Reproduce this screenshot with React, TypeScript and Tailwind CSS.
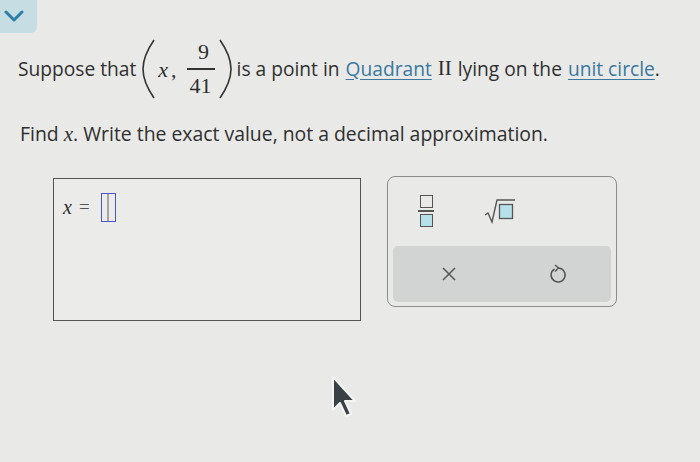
import React from "react";

const sans = { fontFamily: '"Open Sans", "DejaVu Sans", sans-serif' };
const serif = { fontFamily: '"Liberation Serif", "DejaVu Serif", serif' };

function Paren({ flip }: { flip?: boolean }) {
  return (
    <svg width="14" height="62" viewBox="0 0 14 62" className="shrink-0">
      <path
        d={flip ? "M2 2 Q13 18 13 31 Q13 44 2 60" : "M12 2 Q1 18 1 31 Q1 44 12 60"}
        fill="none"
        stroke="#333"
        strokeWidth="1.6"
      />
    </svg>
  );
}

export default function App() {
  return (
    <div className="w-[700px] h-[462px] bg-[#e9e9e7] overflow-hidden relative text-[#2f2f2f]" style={sans}>
      <div className="w-[37px] h-[33px] bg-[#c6dee3] rounded-br-[6px] flex items-center justify-center">
        <svg width="20" height="12" viewBox="0 0 20 12" className="-ml-[10px] -mt-[2px]">
          <path d="M2 2 L10 10 L18 2" fill="none" stroke="#2b7ea6" strokeWidth="3" strokeLinecap="round" strokeLinejoin="round" />
        </svg>
      </div>

      <div className="pl-[18px] mt-[5px] flex items-center h-[62px] text-[19.2px]">
        <span>Suppose that</span>
        <span className="ml-[6px]"><Paren /></span>
        <span className="italic text-[22px] ml-[2px]" style={serif}>x</span>
        <span className="text-[22px] ml-[3px]" style={serif}>,</span>
        <span className="flex flex-col items-center ml-[10px] text-[22px] leading-none" style={serif}>
          <span className="pb-[5px] pl-[6px]">9</span>
          <span className="w-[28px] h-[1.5px] bg-[#333]"></span>
          <span className="pt-[5px]">41</span>
        </span>
        <span className="ml-[3px]"><Paren flip /></span>
        <span className="ml-[5px]">is a point in</span>
        <span className="ml-[6px] underline underline-offset-[3px] text-[#3a78a0] decoration-[#3a78a0]">Quadrant</span>
        <span className="ml-[6px] text-[21px]" style={serif}>II</span>
        <span className="ml-[6px]">lying on the</span>
        <span className="ml-[6px] underline underline-offset-[3px] text-[#3a78a0] decoration-[#3a78a0]">unit circle</span>
        <span>.</span>
      </div>

      <div className="pl-[20px] mt-[23px] text-[19.4px] leading-[22px]">
        Find <span className="italic text-[21px]" style={serif}>x</span>. Write the exact value, not a decimal approximation.
      </div>

      <div className="flex mt-[31px] pl-[53px] items-start">
        <div className="w-[308px] h-[143px] border border-[#555] bg-[#ebebea] mt-[2px] pt-[13px] pl-[9px] flex items-start">
          <div className="flex items-center h-[30px]">
            <span className="italic text-[20px]" style={serif}>x</span>
            <span className="ml-[7px] text-[19px] text-[#555]" style={serif}>=</span>
            <div className="ml-[11px] w-[15px] h-[29px] border-[1.5px] border-[#4a55c9] relative flex justify-center">
              <div className="w-[2px] h-full bg-[#777] opacity-60"></div>
            </div>
          </div>
        </div>

        <div className="ml-[26px] w-[230px] h-[131px] border border-[#8d8d8d] rounded-[8px] flex flex-col px-[5px] pt-[18px] pb-[4px]">
          <div className="flex items-center h-[32px] pl-[25px]">
            <div className="flex flex-col items-center">
              <div className="w-[13px] h-[13px] border border-[#555]"></div>
              <div className="w-[16px] h-[1.5px] bg-[#555] my-[2px]"></div>
              <div className="w-[13px] h-[13px] border border-[#555] bg-[#b6e1ea]"></div>
            </div>
            <svg width="32" height="26" viewBox="0 0 32 26" className="ml-[50px]">
              <path d="M1 17 L4 15 L8 24 L13 2 L31 2" fill="none" stroke="#555" strokeWidth="1.4" />
              <rect x="15.5" y="6.5" width="13" height="14" fill="#b6e1ea" stroke="#555" strokeWidth="1.3" />
            </svg>
          </div>
          <div className="mt-auto h-[56px] bg-[#d2d3d3] rounded-[5px] flex items-center">
            <svg width="16" height="16" viewBox="0 0 16 16" className="ml-[48px]">
              <path d="M2 2 L14 14 M14 2 L2 14" stroke="#555" strokeWidth="1.5" />
            </svg>
            <svg width="18" height="20" viewBox="0 0 18 20" className="ml-[92px]">
              <path d="M5.5 5 A7 7 0 1 0 9 4" fill="none" stroke="#555" strokeWidth="1.5" />
              <path d="M6 1 L9.5 4 L6 7.5" fill="none" stroke="#555" strokeWidth="1.5" strokeLinejoin="round" />
            </svg>
          </div>
        </div>
      </div>

      <svg width="30" height="46" viewBox="0 0 30 46" className="absolute left-[329px] top-[374px]">
        <path d="M4 3 L4 36 L11 29 L17 42 L22 40 L16 27 L26 27 Z" fill="#3a4146" stroke="#f4f4f4" strokeWidth="2" strokeLinejoin="round" />
      </svg>
    </div>
  );
}
